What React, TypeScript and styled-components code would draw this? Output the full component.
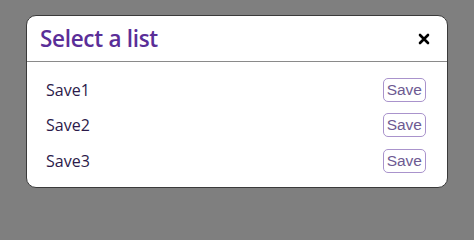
import React from "react";
import styled, { createGlobalStyle } from "styled-components";

const Global = createGlobalStyle`
  html, body { margin: 0; padding: 0; background: #7f7f7f; }
  body { font-family: "Open Sans", "Noto Sans", sans-serif; }
`;

const Page = styled.div`
  width: 474px;
  height: 200px;
  padding: 15px 0 0 26px;
  box-sizing: border-box;
`;

const Modal = styled.div`
  width: 422px;
  height: 173px;
  box-sizing: border-box;
  background: #fff;
  border: 1px solid #3a3a3a;
  border-radius: 10px;
  display: flex;
  flex-direction: column;
  overflow: hidden;
`;

const Header = styled.div`
  height: 46px;
  box-sizing: border-box;
  border-bottom: 1px solid #8a8a8a;
  display: flex;
  align-items: center;
  justify-content: space-between;
  padding: 0 17px 0 13px;
`;

const Title = styled.h2`
  margin: 0;
  font-family: "Open Sans", "Noto Sans", sans-serif;
  font-weight: 600;
  font-size: 22.5px;
  color: #5a2e98;
  letter-spacing: -0.3px;
`;

const Close = styled.button`
  border: none;
  background: none;
  padding: 0;
  width: 12px;
  height: 12px;
  display: flex;
  align-items: center;
  justify-content: center;
  cursor: pointer;
`;

const Body = styled.div`
  padding: 10px 21px 0 19px;
  display: flex;
  flex-direction: column;
`;

const Row = styled.div`
  height: 35.5px;
  display: flex;
  align-items: center;
  justify-content: space-between;
`;

const Name = styled.span`
  font-family: "Open Sans", "Noto Sans", sans-serif;
  font-size: 16px;
  color: #2c1a4a;
`;

const SaveButton = styled.button`
  height: 24px;
  padding: 0 3px;
  box-sizing: border-box;
  border: 1px solid #a993cc;
  border-radius: 5px;
  background: #fff;
  color: #6d5a92;
  font-family: "Liberation Sans", Arial, sans-serif;
  font-size: 15.5px;
  line-height: 20px;
  cursor: pointer;
`;

const items = ["Save1", "Save2", "Save3"];

export default function App() {
  return (
    <>
      <Global />
      <Page>
        <Modal>
          <Header>
            <Title>Select a list</Title>
            <Close aria-label="Close">
              <svg width="12" height="12" viewBox="0 0 12 12">
                <path d="M2 2 L10 10 M10 2 L2 10" stroke="#000" strokeWidth="2.6" strokeLinecap="round" />
              </svg>
            </Close>
          </Header>
          <Body>
            {items.map((n) => (
              <Row key={n}>
                <Name>{n}</Name>
                <SaveButton>Save</SaveButton>
              </Row>
            ))}
          </Body>
        </Modal>
      </Page>
    </>
  );
}
